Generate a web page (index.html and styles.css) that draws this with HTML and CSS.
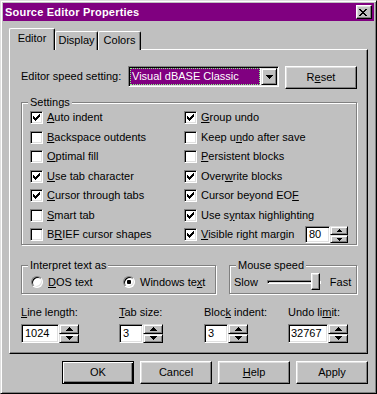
FILE: index.html
```html
<!DOCTYPE html>
<html>
<head>
<meta charset="utf-8">
<link rel="stylesheet" href="styles.css">
</head>
<body>
<div class="window">
  <div class="titlebar">
    <span class="title">Source Editor Properties</span>
    <div class="close"><svg width="8" height="7" viewBox="0 0 8 7"><path d="M0 0h2v1H0zM6 0h2v1H6zM1 1h2v1H1zM5 1h2v1H5zM2 2h4v1H2zM3 3h2v1H3zM2 4h4v1H2zM1 5h2v1H1zM5 5h2v1H5zM0 6h2v1H0zM6 6h2v1H6z" fill="#000"/></svg></div>
  </div>
  <div class="content">
    <div class="tabs">
      <div class="tab active">Editor</div>
      <div class="tab">Display</div>
      <div class="tab">Colors</div>
    </div>
    <div class="panel">
      <div class="speed-row">
        <span class="speed-label">Editor speed setting:</span>
        <div class="combo">
          <div class="combo-value"><span class="combo-text">Visual dBASE Classic</span></div>
          <div class="combo-btn"><svg width="7" height="4" viewBox="0 0 7 4"><path d="M0 0h7v1H6v1H5v1H4v1H3V3H2V2H1V1H0z" fill="#000"/></svg></div>
        </div>
        <div class="btn reset">R<u>e</u>set</div>
      </div>

      <fieldset class="group settings">
        <legend>Settings</legend>
        <div class="check-grid">
          <div class="check"><span class="cb on"><svg width="7" height="7" viewBox="0 0 7 7"><path d="M0 2h1v3H0zM1 3h1v3H1zM2 4h1v3H2zM3 3h1v3H3zM4 2h1v3H4zM5 1h1v3H5zM6 0h1v3H6z"/></svg></span><span><u>A</u>uto indent</span></div>
          <div class="check"><span class="cb on"><svg width="7" height="7" viewBox="0 0 7 7"><path d="M0 2h1v3H0zM1 3h1v3H1zM2 4h1v3H2zM3 3h1v3H3zM4 2h1v3H4zM5 1h1v3H5zM6 0h1v3H6z"/></svg></span><span><u>G</u>roup undo</span></div>
          <div class="check"><span class="cb"></span><span><u>B</u>ackspace outdents</span></div>
          <div class="check"><span class="cb"></span><span>Keep u<u>n</u>do after save</span></div>
          <div class="check"><span class="cb"></span><span><u>O</u>ptimal fill</span></div>
          <div class="check"><span class="cb"></span><span><u>P</u>ersistent blocks</span></div>
          <div class="check"><span class="cb on"><svg width="7" height="7" viewBox="0 0 7 7"><path d="M0 2h1v3H0zM1 3h1v3H1zM2 4h1v3H2zM3 3h1v3H3zM4 2h1v3H4zM5 1h1v3H5zM6 0h1v3H6z"/></svg></span><span><u>U</u>se tab character</span></div>
          <div class="check"><span class="cb on"><svg width="7" height="7" viewBox="0 0 7 7"><path d="M0 2h1v3H0zM1 3h1v3H1zM2 4h1v3H2zM3 3h1v3H3zM4 2h1v3H4zM5 1h1v3H5zM6 0h1v3H6z"/></svg></span><span>Over<u>w</u>rite blocks</span></div>
          <div class="check"><span class="cb on"><svg width="7" height="7" viewBox="0 0 7 7"><path d="M0 2h1v3H0zM1 3h1v3H1zM2 4h1v3H2zM3 3h1v3H3zM4 2h1v3H4zM5 1h1v3H5zM6 0h1v3H6z"/></svg></span><span><u>C</u>ursor through tabs</span></div>
          <div class="check"><span class="cb on"><svg width="7" height="7" viewBox="0 0 7 7"><path d="M0 2h1v3H0zM1 3h1v3H1zM2 4h1v3H2zM3 3h1v3H3zM4 2h1v3H4zM5 1h1v3H5zM6 0h1v3H6z"/></svg></span><span>Cursor beyond EO<u>F</u></span></div>
          <div class="check"><span class="cb"></span><span><u>S</u>mart tab</span></div>
          <div class="check"><span class="cb on"><svg width="7" height="7" viewBox="0 0 7 7"><path d="M0 2h1v3H0zM1 3h1v3H1zM2 4h1v3H2zM3 3h1v3H3zM4 2h1v3H4zM5 1h1v3H5zM6 0h1v3H6z"/></svg></span><span>Use s<u>y</u>ntax highlighting</span></div>
          <div class="check"><span class="cb"></span><span>B<u>R</u>IEF cursor shapes</span></div>
          <div class="check"><span class="cb on"><svg width="7" height="7" viewBox="0 0 7 7"><path d="M0 2h1v3H0zM1 3h1v3H1zM2 4h1v3H2zM3 3h1v3H3zM4 2h1v3H4zM5 1h1v3H5zM6 0h1v3H6z"/></svg></span><span><u>V</u>isible right margin</span>
            <div class="spin small">
              <div class="edit">80</div>
              <div class="arrows">
                <div class="arrow"><svg width="5" height="3" viewBox="0 0 5 3"><path d="M2 0h1v1h1v1h1v1H0V2h1V1h1z"/></svg></div>
                <div class="arrow"><svg width="5" height="3" viewBox="0 0 5 3"><path d="M0 0h5v1H4v1H3v1H2V2H1V1H0z"/></svg></div>
              </div>
            </div>
          </div>
        </div>
      </fieldset>

      <div class="group-row">
        <fieldset class="group interpret">
          <legend>Interpret text as</legend>
          <div class="radios">
            <div class="radio-item dos"><span class="radio"></span><span><u>D</u>OS text</span></div>
            <div class="radio-item"><span class="radio on"></span><span>Windows te<u>x</u>t</span></div>
          </div>
        </fieldset>
        <fieldset class="group mouse">
          <legend>Mouse speed</legend>
          <div class="slider-row">
            <span>Slow</span>
            <div class="slider">
              <div class="track"></div>
              <div class="thumb"></div>
            </div>
            <span>Fast</span>
          </div>
        </fieldset>
      </div>

      <div class="spin-row">
        <div class="field">
          <span class="field-label"><u>L</u>ine length:</span>
          <div class="spin w-line">
            <div class="edit">1024</div>
            <div class="arrows">
              <div class="arrow"><svg width="7" height="4" viewBox="0 0 7 4"><path d="M3 0h1v1h1v1h1v1h1v1H0V3h1V2h1V1h1z"/></svg></div>
              <div class="arrow"><svg width="7" height="4" viewBox="0 0 7 4"><path d="M0 0h7v1H6v1H5v1H4v1H3V3H2V2H1V1H0z"/></svg></div>
            </div>
          </div>
        </div>
        <div class="field">
          <span class="field-label"><u>T</u>ab size:</span>
          <div class="spin w-tab">
            <div class="edit">3</div>
            <div class="arrows">
              <div class="arrow"><svg width="7" height="4" viewBox="0 0 7 4"><path d="M3 0h1v1h1v1h1v1h1v1H0V3h1V2h1V1h1z"/></svg></div>
              <div class="arrow"><svg width="7" height="4" viewBox="0 0 7 4"><path d="M0 0h7v1H6v1H5v1H4v1H3V3H2V2H1V1H0z"/></svg></div>
            </div>
          </div>
        </div>
        <div class="field">
          <span class="field-label">Bloc<u>k</u> indent:</span>
          <div class="spin w-block">
            <div class="edit">3</div>
            <div class="arrows">
              <div class="arrow"><svg width="7" height="4" viewBox="0 0 7 4"><path d="M3 0h1v1h1v1h1v1h1v1H0V3h1V2h1V1h1z"/></svg></div>
              <div class="arrow"><svg width="7" height="4" viewBox="0 0 7 4"><path d="M0 0h7v1H6v1H5v1H4v1H3V3H2V2H1V1H0z"/></svg></div>
            </div>
          </div>
        </div>
        <div class="field">
          <span class="field-label">Undo li<u>m</u>it:</span>
          <div class="spin w-undo">
            <div class="edit">32767</div>
            <div class="arrows">
              <div class="arrow"><svg width="7" height="4" viewBox="0 0 7 4"><path d="M3 0h1v1h1v1h1v1h1v1H0V3h1V2h1V1h1z"/></svg></div>
              <div class="arrow"><svg width="7" height="4" viewBox="0 0 7 4"><path d="M0 0h7v1H6v1H5v1H4v1H3V3H2V2H1V1H0z"/></svg></div>
            </div>
          </div>
        </div>
      </div>
    </div>

    <div class="buttons">
      <div class="btn default">OK</div>
      <div class="btn">Cancel</div>
      <div class="btn"><u>H</u>elp</div>
      <div class="btn">Apply</div>
    </div>
  </div>
</div>
</body>
</html>
```

FILE: styles.css
```css
* { box-sizing: border-box; }
html, body { margin: 0; padding: 0; }
body {
  font-family: "Liberation Sans", Arial, sans-serif;
  font-size: 11px;
  line-height: 13px;
  color: #000;
  background: #c0c0c0;
}
u { text-decoration: underline; text-underline-offset: 1px; }

.window {
  width: 377px;
  height: 394px;
  background: #c0c0c0;
  border: 1px solid;
  border-color: #dfdfdf #000 #000 #dfdfdf;
  box-shadow: inset 1px 1px #fff, inset -1px -1px #808080;
  padding: 2px;
  display: flex;
  flex-direction: column;
}

.titlebar {
  height: 18px;
  background: #800080;
  color: #fff;
  display: flex;
  align-items: center;
  justify-content: space-between;
  padding: 0 2px;
}
.title { font-weight: bold; letter-spacing: 0.2px; }
.close {
  width: 16px;
  height: 14px;
  background: #c0c0c0;
  border: 1px solid;
  border-color: #fff #000 #000 #fff;
  box-shadow: inset -1px -1px #808080, inset 1px 1px #dfdfdf;
  display: flex;
  align-items: center;
  padding-left: 2px;
}
.close svg { display: block; }

.content { padding: 7px 6px 0 6px; }

.tabs {
  display: flex;
  height: 22px;
  margin-bottom: -1px;
  position: relative;
  z-index: 1;
}
.tab {
  height: 19px;
  margin-top: 3px;
  width: 43px;
  border-top: 1px solid #fff;
  border-left: 1px solid #fff;
  border-right: 1px solid #000;
  box-shadow: inset -1px 0 #808080;
  border-radius: 2px 2px 0 0;
  background: #c0c0c0;
  display: flex;
  align-items: center;
  justify-content: center;
  padding-bottom: 1px;
}
.tab.active {
  height: 22px;
  margin-top: 0;
  width: 46px;
  padding-bottom: 2px;
}

.panel {
  height: 305px;
  border: 1px solid;
  border-color: #fff #000 #000 #fff;
  box-shadow: inset -1px -1px #808080;
  padding: 16px 9px 0 11px;
}

.speed-row { display: flex; align-items: flex-start; height: 23px; }
.speed-label { width: 107px; line-height: 21px; }
.combo {
  width: 151px;
  height: 21px;
  margin-right: 6px;
  background: #fff;
  border: 1px solid;
  border-color: #808080 #fff #fff #808080;
  box-shadow: inset 1px 1px #000, inset -1px -1px #dfdfdf;
  padding: 1px 1px 1px 1px;
  display: flex;
}
.combo-value {
  flex: 1;
  background: #800080;
  color: #fff;
  border: 1px dotted #7fff7f;
  display: flex;
  align-items: center;
  padding-left: 1px;
}
.combo-btn {
  width: 16px;
  margin-left: 1px;
  background: #c0c0c0;
  border: 1px solid;
  border-color: #dfdfdf #000 #000 #dfdfdf;
  box-shadow: inset 1px 1px #fff, inset -1px -1px #808080;
  display: flex;
  align-items: center;
  justify-content: center;
}
.combo-btn svg { display: block; }

.btn {
  width: 72px;
  height: 23px;
  background: #c0c0c0;
  border: 1px solid;
  border-color: #fff #000 #000 #fff;
  box-shadow: inset -1px -1px #808080, inset 1px 1px #dfdfdf;
  display: flex;
  align-items: center;
  justify-content: center;
}
.btn.default {
  border-color: #000;
  box-shadow: inset 1px 1px #fff, inset -1px -1px #000, inset -2px -2px #808080;
}

.group {
  margin: 0;
  padding: 0;
  min-width: 0;
  border: 1px solid #808080;
  box-shadow: inset 1px 1px #fff, 1px 1px #fff;
}
.group legend {
  margin-left: 6px;
  padding: 0 2px;
  background: #c0c0c0;
  line-height: 13px;
}

.settings {
  margin-top: 7px;
  width: 336px;
  height: 149px;
}
.check-grid {
  display: grid;
  grid-template-columns: 154px 1fr;
  grid-auto-rows: 19.5px;
  padding-left: 8px;
  margin-top: -1px;
}
.check { display: flex; align-items: center; gap: 4px; }
.cb {
  width: 13px;
  height: 13px;
  flex: none;
  background: #fff;
  border: 1px solid;
  border-color: #808080 #fff #fff #808080;
  box-shadow: inset 1px 1px #000, inset -1px -1px #dfdfdf;
  display: flex;
  align-items: center;
  justify-content: center;
}
.cb svg { display: block; }

.spin { display: flex; }
.spin.small { margin-left: auto; margin-right: 8px; height: 17px; }
.edit {
  background: #fff;
  border: 1px solid;
  border-color: #808080 #fff #fff #808080;
  box-shadow: inset 1px 1px #000, inset -1px -1px #dfdfdf;
  padding-left: 3px;
  display: flex;
  align-items: center;
}
.spin.small .edit { width: 25px; }
.spin.small .arrows { width: 18px; }
.arrows { display: flex; flex-direction: column; width: 20px; }
.arrow {
  flex: 1;
  background: #c0c0c0;
  border: 1px solid;
  border-color: #dfdfdf #000 #000 #dfdfdf;
  box-shadow: inset 1px 1px #fff, inset -1px -1px #808080;
  display: flex;
  align-items: center;
  justify-content: center;
}
.arrow svg { display: block; }

.group-row { display: flex; gap: 13px; margin-top: 14px; }
.interpret { width: 195px; height: 35px; }
.mouse { width: 128px; height: 35px; }
.radios { display: flex; align-items: center; height: 20px; padding-left: 9px; }
.radio-item { display: flex; align-items: center; gap: 5px; }
.radio-item.dos { width: 92px; }
.radio {
  width: 12px;
  height: 12px;
  border-radius: 50%;
  background: #fff;
  border: 1px solid;
  border-color: #808080 #fff #fff #808080;
  box-shadow: inset 1px 1px #000, inset -1px -1px #dfdfdf;
  display: flex;
  align-items: center;
  justify-content: center;
}
.radio.on::after {
  content: "";
  width: 4px;
  height: 4px;
  border-radius: 1px;
  background: #000;
}

.slider-row { display: flex; align-items: center; height: 20px; padding-left: 4px; }
.slider {
  position: relative;
  width: 54px;
  height: 18px;
  margin: 0 9px 0 9px;
  display: flex;
  align-items: center;
}
.track {
  width: 100%;
  height: 4px;
  border: 1px solid;
  border-color: #808080 #fff #fff #808080;
  box-shadow: inset 1px 1px #000, inset -1px -1px #dfdfdf;
}
.thumb {
  position: absolute;
  right: 1px;
  top: 0;
  width: 9px;
  height: 17px;
  background: #c0c0c0;
  border: 1px solid;
  border-color: #fff #000 #000 #fff;
  box-shadow: inset -1px -1px #808080, inset 1px 1px #dfdfdf;
}

.spin-row {
  display: grid;
  grid-template-columns: 98px 85px 84px 1fr;
  margin-top: 12px;
}
.field { display: flex; flex-direction: column; gap: 5px; }
.field .spin { height: 19px; }
.w-line .edit { width: 38px; }
.w-tab .edit { width: 24px; }
.w-block .edit { width: 24px; }
.w-undo .edit { width: 40px; padding-left: 2px; }

.buttons {
  display: flex;
  justify-content: flex-end;
  gap: 6px;
  margin-top: 7px;
}
```
